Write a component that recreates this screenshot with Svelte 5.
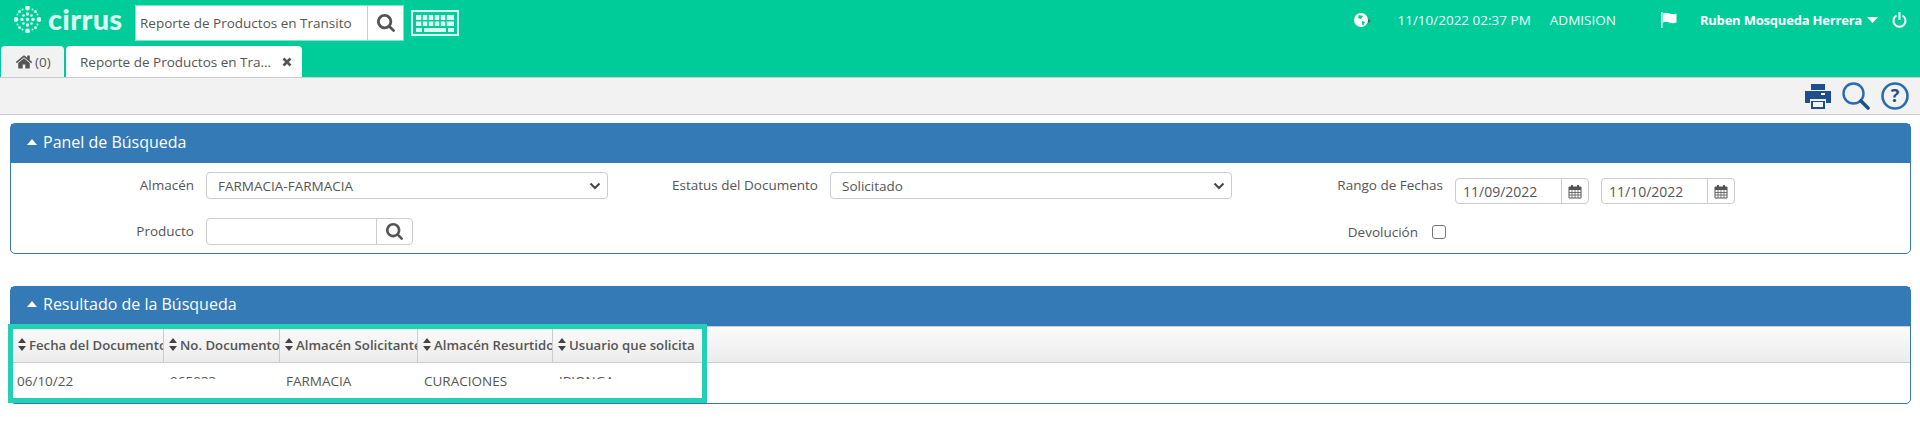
<!--
  Reporte de Productos en Transito: top bar, tabs, toolbar, search panel and results grid.
-->
<script>
  const searchPath = 'M1152 704q0-185-131.5-316.5t-316.5-131.5-316.5 131.5-131.5 316.5 131.5 316.5 316.5 131.5 316.5-131.5 131.5-316.5zm512 832q0 52-38 90t-90 38q-54 0-90-38l-343-342q-179 124-399 124-143 0-273.5-55.5t-225-150-150-225-55.5-273.5 55.5-273.5 150-225 225-150 273.5-55.5 273.5 55.5 225 150 150 225 55.5 273.5q0 220-124 399l343 343q37 37 37 90z';
  const homePath = 'M1472 992v480q0 26-19 45t-45 19h-384v-384h-256v384h-384q-26 0-45-19t-19-45v-480q0-1 .5-3t.5-3l575-474 575 474q1 2 1 6zm223-69l-62 74q-8 9-21 11h-3q-13 0-21-7l-692-577-692 577q-12 8-24 7-13-2-21-11l-62-74q-8-10-7-23.5t11-21.5l719-599q32-26 76-26t76 26l244 204v-195q0-14 9-23t23-9h192q14 0 23 9t9 23v408l219 182q10 8 11 21.5t-7 23.5z';

  const columns = [
    { title: 'Fecha del Documento', width: 151, value: '06/10/22' },
    { title: 'No. Documento', width: 116, value: '965033', cut: true },
    { title: 'Almacén Solicitante', width: 138, value: 'FARMACIA' },
    { title: 'Almacén Resurtido', width: 135, value: 'CURACIONES' },
    { title: 'Usuario que solicita', width: 150, value: 'JBJONGA', cut: true }
  ];

  // logo dots, as [cx, cy, r]
  const dots = [
    [13.5, 2, 2.4], [13.5, 8, 1.7], [13.5, 13.5, 1.7], [13.5, 19, 1.7], [13.5, 25, 2.4],
    [2, 13.5, 2.4], [8, 13.5, 1.7], [19, 13.5, 1.7], [25, 13.5, 2.4],
    [5.5, 5.5, 1.5], [9.5, 9.5, 1.3], [17.5, 9.5, 1.3], [21.5, 5.5, 1.5],
    [5.5, 21.5, 1.5], [9.5, 17.5, 1.3], [17.5, 17.5, 1.3], [21.5, 21.5, 1.5],
    [8.5, 3.5, 1], [18.5, 3.5, 1], [3.5, 8.5, 1], [23.5, 8.5, 1],
    [3.5, 18.5, 1], [23.5, 18.5, 1], [8.5, 23.5, 1], [18.5, 23.5, 1]
  ];
</script>

{#snippet calendar()}
  <svg class="cal" viewBox="0 0 14 15" width="14" height="15">
    <path d="M1 3h12v11H1z" fill="#fff" stroke="#555" stroke-width="1"/>
    <path d="M1 3h12v3H1z" fill="#555"/>
    <path d="M4 1v3M10 1v3" stroke="#555" stroke-width="2"/>
    <path d="M1 8.5h12M1 11h12M4 6v8M7 6v8M10 6v8" stroke="#555" stroke-width=".8"/>
  </svg>
{/snippet}

{#snippet chevron()}
  <svg class="chev" viewBox="0 0 12 8" width="12" height="8"><path d="M1.5 1.5 6 6l4.5-4.5" fill="none" stroke="#444" stroke-width="2"/></svg>
{/snippet}

{#snippet caret()}
  <svg class="caret" viewBox="0 0 10 6" width="10" height="6"><path d="M0 6 5 0l5 6z" fill="#fff"/></svg>
{/snippet}

<div class="page">
  <header class="top">
    <div class="top-row">
      <div class="logo">
        <svg viewBox="0 0 27 27" width="27" height="27">
          {#each dots as [cx, cy, r]}<circle {cx} {cy} {r} fill="#d9fbf1"/>{/each}
        </svg>
        <span>cirrus</span>
      </div>
      <div class="menu-search">
        <span class="menu-text">Reporte de Productos en Transito</span>
        <button aria-label="Buscar"><svg viewBox="0 0 1664 1664" width="18" height="18"><path d={searchPath} fill="#555"/></svg></button>
      </div>
      <svg class="kbd" viewBox="0 0 48 26" width="48" height="26">
        <rect x="1" y="1" width="46" height="24" fill="none" stroke="#d9fbf1" stroke-width="2"/>
        <path d="M5 5h38v5H5zM5 11.5h38v4.500H5zM5 18h6v4H5zM13 18h22v4H13zM37 18h6v4h-6z" fill="#d9fbf1"/>
        <path d="M11 5v11M17 5v11M23 5v11M29 5v11M35 5v11" stroke="#00cc99" stroke-width="1.500"/>
      </svg>
      <div class="spacer"></div>
      <svg class="globe" viewBox="0 0 19 16" width="19" height="16">
        <circle cx="8" cy="8" r="7" fill="#fff"/>
        <path d="M6 3 10 4 8 7 5 6zM9 9l3 1-2 4-1-2z" fill="#00cc99"/>
        <path d="m15 7 3 2-3 2z" fill="#3a6b5c"/>
      </svg>
      <span class="clock">11/10/2022 02:37 PM</span>
      <span class="area">ADMISION</span>
      <svg class="flag" viewBox="0 0 17 16" width="17" height="16">
        <path d="M1 0h1.500v16H1z" fill="#fff"/>
        <path d="M3 1.500q3-1.500 6.500 0t7 0v9q-3.500 1.500-7 0t-6.500 0z" fill="#fff"/>
      </svg>
      <span class="user">Ruben Mosqueda Herrera</span>
      <svg class="user-caret" viewBox="0 0 11 6" width="11" height="6"><path d="M0 0h11L5.500 6z" fill="#fff"/></svg>
      <svg class="power" viewBox="0 0 15 16" width="15" height="16">
        <path d="M4.500 3.500a6 6 0 1 0 6 0" fill="none" stroke="#fff" stroke-width="2"/>
        <path d="M7.500 0v8" stroke="#fff" stroke-width="2"/>
      </svg>
    </div>
    <nav class="tabs">
      <div class="tab home">
        <svg viewBox="0 0 1792 1792" width="18" height="18"><path d={homePath} fill="#555"/></svg>
        <span>(0)</span>
      </div>
      <div class="tab active">
        <span>Reporte de Productos en Tra...</span>
        <svg class="close" viewBox="0 0 10 10" width="10" height="10"><path d="M1.500 1.500l7 7M8.500 1.500l-7 7" stroke="#555" stroke-width="2.600"/></svg>
      </div>
    </nav>
  </header>

  <div class="toolbar">
    <svg viewBox="0 0 26 25" width="26" height="25">
      <path d="M6 0h14v6H6z" fill="#1f4e8c"/>
      <path d="M0 7h26v12h-5v-4H5v4H0z" fill="#1f4e8c"/>
      <path d="M16 9h4v2h-4z" fill="#fff"/>
      <path d="M6 17h14v8H6z" fill="#1f4e8c"/>
      <path d="M8 18h10v5H8z" fill="#f2f2f2"/>
    </svg>
    <svg viewBox="0 0 28 28" width="28" height="28">
      <circle cx="11.500" cy="11.500" r="10" fill="none" stroke="#2a6cb0" stroke-width="2.400"/>
      <path d="m19 19 7 7" stroke="#1f4e8c" stroke-width="3.600" stroke-linecap="round"/>
    </svg>
    <svg viewBox="0 0 28 28" width="28" height="28">
      <circle cx="14" cy="14" r="12.500" fill="none" stroke="#2a6cb0" stroke-width="2.600"/>
      <text x="14" y="20" text-anchor="middle" class="q">?</text>
    </svg>
  </div>

  <section class="panel search">
    <h2>{@render caret()}Panel de Búsqueda</h2>
    <div class="form">
      <div class="group">
        <span class="label">Almacén</span>
        <div class="select"><span>FARMACIA-FARMACIA</span>{@render chevron()}</div>
      </div>
      <div class="group">
        <span class="label">Estatus del Documento</span>
        <div class="select"><span>Solicitado</span>{@render chevron()}</div>
      </div>
      <div class="group">
        <span class="label">Rango de Fechas</span>
        <div class="dates">
          <div class="date"><span>11/09/2022</span><i>{@render calendar()}</i></div>
          <div class="date"><span>11/10/2022</span><i>{@render calendar()}</i></div>
        </div>
      </div>
      <div class="group second">
        <span class="label">Producto</span>
        <div class="lookup"><span></span><i><svg viewBox="0 0 1664 1664" width="17" height="17"><path d={searchPath} fill="#555"/></svg></i></div>
      </div>
      <div class="group second"></div>
      <div class="group second">
        <span class="label dev">Devolución</span>
        <span class="check"></span>
      </div>
    </div>
  </section>

  <section class="panel results">
    <h2>{@render caret()}Resultado de la Búsqueda</h2>
    <div class="grid-head">
      {#each columns as c}
        <div class="th" style="width:{c.width}px">
          <svg viewBox="0 0 8 13" width="8" height="13"><path d="M4 0l4 5H0zM4 13 0 8h8z" fill="#444"/></svg>
          <span>{c.title}</span>
        </div>
      {/each}
    </div>
    <div class="grid-row">
      {#each columns as c}
        <div class="td" style="width:{c.width}px"><span class:cut={c.cut}>{c.value}</span></div>
      {/each}
    </div>
    <div class="highlight"></div>
  </section>
</div>

<style>
  :global(body) { margin: 0; background: #fff; }
  .page { width: 1920px; height: 434px; overflow: hidden; font-family: "Open Sans", sans-serif; font-size: 13.5px; color: #555; }

  .top { background: #00cc99; height: 77px; display: flex; flex-direction: column; }
  .top-row { height: 46px; display: flex; align-items: flex-start; padding: 5px 13px 0 14px; box-sizing: border-box; color: #f2fffb; }
  .logo { display: flex; align-items: flex-start; gap: 7px; width: 121px; padding-top: 1px; }
  .logo span { font-family: Lato, sans-serif; font-weight: 900; font-size: 29px; line-height: 26px; color: #d9fbf1; letter-spacing: 0.3px; }
  .menu-search { width: 269px; height: 36px; background: #fff; border: 1px solid #7fe6cc; box-sizing: border-box; display: flex; align-items: center; color: #555; }
  .menu-text { flex: 1; padding-left: 4px; white-space: nowrap; }
  .menu-search button { width: 36px; height: 100%; border: 0; border-left: 1px solid #ccc; background: #fff; padding: 0; display: flex; align-items: center; justify-content: center; }
  .kbd { margin: 5px 0 0 7px; }
  .spacer { flex: 1; }
  .globe { margin-top: 7px; }
  .clock { margin: 6px 0 0 25px; line-height: 18px; }
  .area { margin: 6px 0 0 19px; line-height: 18px; }
  .flag { margin: 7px 0 0 44px; }
  .user { margin: 6px 0 0 23px; line-height: 18px; font-size: 13px; font-weight: 700; letter-spacing: -0.2px; color: #fff; }
  .user-caret { margin: 12px 0 0 5px; }
  .power { margin: 7px 0 0 14px; }

  .tabs { height: 31px; display: flex; gap: 2px; padding-left: 1px; }
  .tab { box-sizing: border-box; border-radius: 4px 4px 0 0; display: flex; align-items: center; }
  .tab.home { width: 63px; background: #f2f2f2; padding-left: 14px; gap: 2px; }
  .tab.active { width: 236px; background: #fff; padding-left: 14px; white-space: nowrap; }
  .close { margin-left: 11px; }

  .toolbar { height: 38px; box-sizing: border-box; background: #f2f2f2; border-top: 1px solid #ccc; border-bottom: 1px solid #ccc; display: flex; justify-content: flex-end; align-items: center; gap: 11px; padding-right: 11px; }
  .q { font-family: "Open Sans", sans-serif; font-size: 18px; font-weight: 700; fill: #1f4e8c; }

  .panel { margin: 0 9px 0 10px; border: 1px solid #337ab7; border-radius: 5px; box-sizing: border-box; position: relative; }
  .panel h2 { margin: 0; height: 39px; box-sizing: border-box; background: #337ab7; color: #fff; font-size: 16px; font-weight: 400; display: flex; align-items: center; padding: 0 0 3px 16px; }
  .caret { margin-right: 6px; }
  .panel.search { margin-top: 8px; height: 131px; }
  .panel.results { margin-top: 32px; height: 118px; }
  .panel.results h2 { padding-bottom: 6px; }

  .form { display: grid; grid-template-columns: 624px 625px 625px; padding-top: 9px; }
  .group { display: flex; height: 27px; }
  .group.second { margin-top: 19px; }
  .label { width: 183px; text-align: right; margin-right: 12px; line-height: 27px; white-space: nowrap; }
  .label.dev { width: 158px; margin-right: 14px; line-height: 28px; }
  .select { width: 402px; box-sizing: border-box; border: 1px solid #ccc; border-radius: 4px; display: flex; align-items: center; justify-content: space-between; padding: 0 6px 0 11px; }
  .dates { display: flex; gap: 12px; margin-top: 6px; }
  .date { width: 134px; height: 26px; box-sizing: border-box; border: 1px solid #ccc; border-radius: 4px; display: flex; align-items: center; font-size: 14px; }
  .date span { flex: 1; padding-left: 7px; }
  .date i, .lookup i { display: flex; align-items: center; justify-content: center; border-left: 1px solid #ccc; height: 100%; }
  .date i { width: 26px; }
  .lookup { width: 207px; box-sizing: border-box; border: 1px solid #ccc; border-radius: 4px; display: flex; align-items: center; }
  .lookup span { flex: 1; }
  .lookup i { width: 35px; }
  .check { width: 14px; height: 14px; margin-top: 7px; border: 1px solid #777; border-radius: 3px; box-sizing: border-box; }

  .grid-head { height: 37px; box-sizing: border-box; display: flex; padding-left: 2px; background: linear-gradient(#fbfbfb, #ececec); border-top: 1px solid #ccc; border-bottom: 1px solid #ccc; font-size: 13.2px; }
  .th { box-sizing: border-box; display: flex; align-items: center; gap: 3px; padding-left: 5px; border-right: 1px solid #ccc; overflow: hidden; white-space: nowrap; font-weight: 600; }
  .th svg { flex-shrink: 0; }
  .th:last-child { border-right: 0; }
  .grid-row { height: 35px; display: flex; padding-left: 2px; }
  .td { box-sizing: border-box; padding: 9px 0 0 6px; line-height: 18px; white-space: nowrap; }
  .td:first-child { padding-left: 4px; }
  .cut { display: block; height: 7px; overflow: hidden; }

  .highlight { position: absolute; left: -3px; top: 37px; width: 699px; height: 79px; box-sizing: border-box; border: 5px solid #22d0b5; pointer-events: none; }
</style>
